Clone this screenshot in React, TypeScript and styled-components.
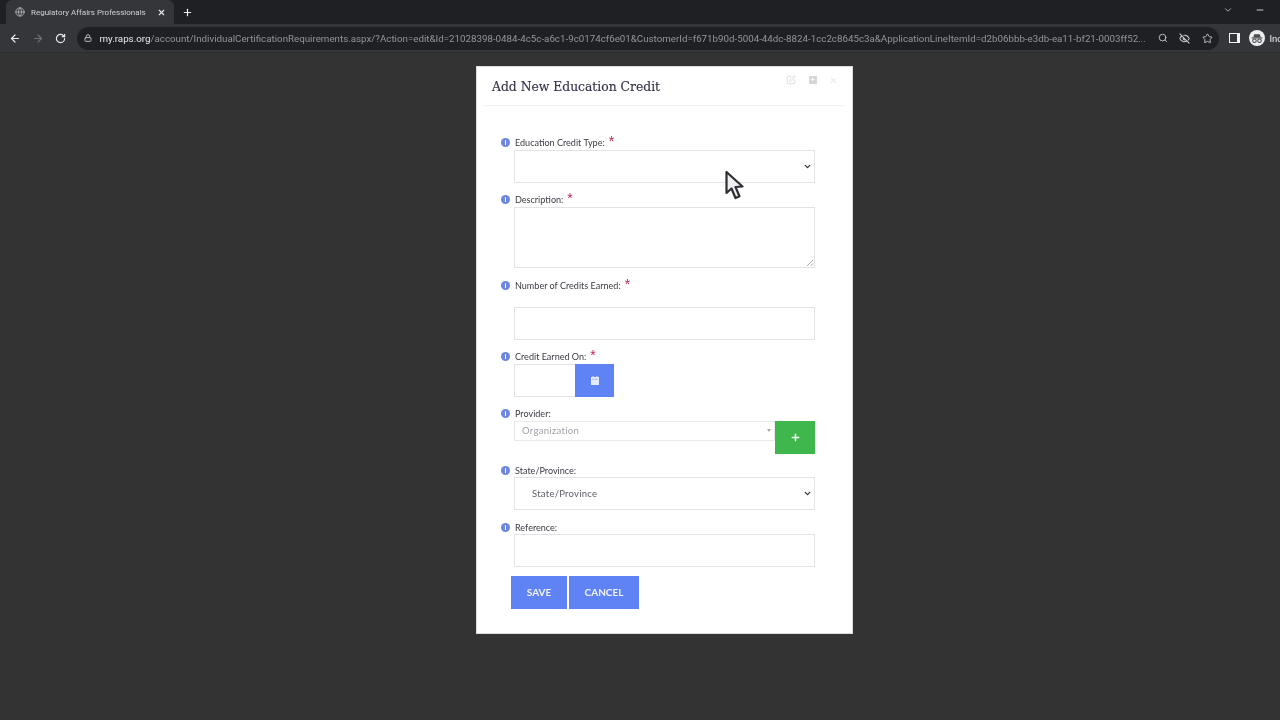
import React from "react";
import styled, { createGlobalStyle } from "styled-components";
import { ArrowLeft, ArrowRight, RotateCw, Lock, Plus, X, ChevronDown, Minus, Search, EyeOff, Star, Globe, SquarePen } from "lucide-react";

const Global = createGlobalStyle`
  html, body { margin: 0; padding: 0; height: 720px; overflow: hidden; background: #333333; }
  body { font-family: "Lato", "Liberation Sans", sans-serif; }
  * { box-sizing: border-box; }
`;

const Screen = styled.div`
  width: 1280px;
  height: 720px;
  position: relative;
  display: flex;
  flex-direction: column;
  overflow: hidden;
  background: #333333;
  filter: blur(0.35px);
`;

const TabStrip = styled.div`
  height: 24px;
  background: #1f2023;
  display: flex;
  align-items: flex-end;
  padding-left: 6px;
  color: #e8eaed;
  flex: none;
`;

const Tab = styled.div`
  width: 168px;
  height: 24px;
  background: #35363a;
  border-radius: 6px 6px 0 0;
  display: flex;
  align-items: center;
  padding: 0 0 0 9px;
  font-family: "Roboto", sans-serif;
  font-size: 8px;
  color: #cfd1d4;
  white-space: nowrap;
`;

const TabTitle = styled.span`
  margin-left: 6px;
  width: 126px;
`;

const NewTab = styled.div`
  margin-left: 8px;
  height: 24px;
  display: flex;
  align-items: center;
`;

const WindowControls = styled.div`
  margin-left: auto;
  height: 20px;
  display: flex;
  align-items: center;
  align-self: flex-start;
  gap: 22px;
  padding-right: 15px;
  color: #c5c7ca;
`;

const Toolbar = styled.div`
  height: 29px;
  background: #35363a;
  border-bottom: 1px solid #2b2c2f;
  display: flex;
  align-items: center;
  padding-left: 9px;
  color: #e8eaed;
  flex: none;
`;

const NavButton = styled.span<{ $dim?: boolean }>`
  width: 12px;
  height: 14px;
  margin-right: 10.5px;
  flex: none;
  display: flex;
  align-items: center;
  justify-content: center;
  color: ${(p) => (p.$dim ? "#6f7175" : "#e8eaed")};
`;

const Omnibox = styled.div`
  width: 1142px;
  flex: none;
  height: 23px;
  border-radius: 12px;
  background: #1f2023;
  display: flex;
  align-items: center;
  padding-left: 7px;
  color: #b9bbbe;
`;

const Url = styled.div`
  margin-left: 8px;
  width: 1048px;
  flex: none;
  font-family: "Roboto", sans-serif;
  font-size: 9.76px;
  color: #92959a;
  white-space: nowrap;
`;

const Host = styled.span`
  color: #e8eaed;
`;

const OmniIcons = styled.div`
  display: flex;
  align-items: center;
  margin-left: 10px;
  gap: 11.5px;
  color: #c5c7ca;
`;

const SidePanelIcon = styled.span`
  width: 11px;
  height: 10px;
  margin-left: 10px;
  flex: none;
  border: 1.5px solid #f1f3f4;
  border-right-width: 3px;
`;

const Avatar = styled.span`
  width: 16px;
  height: 16px;
  margin-left: 9px;
  border-radius: 50%;
  background: #eceef0;
  flex: none;
  display: flex;
  align-items: center;
  justify-content: center;
`;

const Profile = styled.span`
  margin-left: 5px;
  font-family: "Roboto", sans-serif;
  font-size: 9.5px;
  color: #e8eaed;
  white-space: nowrap;
`;

const Page = styled.main`
  flex: 1;
  padding: 13px 0 0 476px;
`;

const Modal = styled.section`
  width: 377px;
  height: 568px;
  background: #ffffff;
  border: 1px solid #dcdcdc;
  display: flex;
  flex-direction: column;
`;

const ModalHeader = styled.header`
  height: 39px;
  margin: 0 8px 0 7px;
  padding-left: 8px;
  border-bottom: 1px solid #f2f2f3;
  display: flex;
  align-items: center;
  justify-content: space-between;
  flex: none;
`;

const Title = styled.h2`
  margin: 0;
  padding-top: 1px;
  font-family: "DejaVu Serif", serif;
  font-weight: 400;
  font-size: 12.35px;
  color: #34334a;
  -webkit-text-stroke: 0.15px #34334a;
`;

const ModalTools = styled.div`
  display: flex;
  align-items: center;
  gap: 12.5px;
  color: #d6d7da;
  margin: -12px 6px 0 0;
`;

const MaximizeIcon = styled.span`
  width: 8px;
  height: 8px;
  background: #d4d5d8;
  border-radius: 1px;
  position: relative;
  &::after {
    content: "+";
    position: absolute;
    inset: 0;
    color: #fff;
    font: 700 8px/8px "Liberation Sans", sans-serif;
    text-align: center;
  }
`;

const Form = styled.form`
  padding: 29px 38px 0 37px;
  display: flex;
  flex-direction: column;
`;

const Field = styled.div<{ $after?: number }>`
  margin-bottom: ${(p) => p.$after ?? 9}px;
`;

const LabelRow = styled.div<{ $below?: number }>`
  height: 14px;
  margin-bottom: ${(p) => p.$below ?? 1}px;
  padding-left: 1px;
  display: flex;
  align-items: center;
  position: relative;
  font-size: 9.05px;
  color: #3a3a44;
  white-space: nowrap;
`;

const InfoDot = styled.span`
  position: absolute;
  left: -13px;
  top: 3px;
  width: 9px;
  height: 9px;
  border-radius: 50%;
  background: #6d86de;
  color: #fff;
  font: 700 7px/9px "Liberation Sans", sans-serif;
  text-align: center;
`;

const Required = styled.span`
  color: #c0264a;
  font-family: "Liberation Sans", sans-serif;
  font-size: 14px;
  line-height: 10px;
  margin-left: 4px;
  position: relative;
  top: -1px;
`;

const controlBase = `
  display: block;
  width: 301px;
  border: 1px solid #e3e3e5;
  background: #fff;
  border-radius: 0;
  outline: none;
  margin: 0;
`;

const SelectWrap = styled.div`
  position: relative;
  width: 301px;
`;

const SelectChevron = styled.span`
  position: absolute;
  right: 3px;
  top: 12px;
  display: flex;
  color: #33333a;
  pointer-events: none;
`;

const Select = styled.select`
  ${controlBase}
  appearance: none;
  height: 33px;
  padding: 0 0 0 17px;
  font-family: "Lato", sans-serif;
  font-size: 9.5px;
  letter-spacing: 0.25px;
  color: #5c5c66;
`;

const AreaWrap = styled.div`
  position: relative;
  width: 301px;
`;

const TextArea = styled.textarea`
  ${controlBase}
  height: 61px;
  resize: none;
`;

const ResizeGrip = styled.svg`
  position: absolute;
  right: 1px;
  bottom: 1px;
  pointer-events: none;
`;

const TextInput = styled.input`
  ${controlBase}
  height: 33px;
`;

const DateGroup = styled.div`
  display: flex;
  height: 33px;
`;

const DateInput = styled.input`
  width: 61px;
  height: 33px;
  border: 1px solid #e3e3e5;
  border-right: 0;
  outline: none;
`;

const CalendarButton = styled.button`
  width: 39px;
  height: 33px;
  border: 0;
  padding: 0;
  background: #5f83f4;
  display: flex;
  align-items: center;
  justify-content: center;
`;

const ProviderRow = styled.div`
  display: flex;
  align-items: flex-start;
  width: 301px;
  height: 33px;
`;

const Combo = styled.div`
  width: 261px;
  height: 20px;
  border: 1px solid #e9e9ea;
  display: flex;
  align-items: center;
  justify-content: space-between;
  padding: 0 3px 1px 7px;
  font-size: 9.5px;
  letter-spacing: 0.3px;
  color: #a2a2a8;
`;

const ComboCaret = styled.span`
  width: 0;
  height: 0;
  border-left: 2px solid transparent;
  border-right: 2px solid transparent;
  border-top: 3px solid #a8a8ae;
`;

const AddButton = styled.button`
  width: 40px;
  height: 33px;
  border: 0;
  padding: 0;
  background: #3fb74c;
  color: #f2fbf3;
  display: flex;
  align-items: center;
  justify-content: center;
`;

const Actions = styled.div`
  display: flex;
  gap: 2px;
  margin-left: -3px;
`;

const ActionButton = styled.button<{ $width: number }>`
  width: ${(p) => p.$width}px;
  height: 33px;
  border: 0;
  padding: 0 0 1px;
  background: #5f83f4;
  color: #f1f4ff;
  font-family: "Lato", sans-serif;
  font-size: 10px;
  font-weight: 700;
`;

const Cursor = styled.svg`
  position: absolute;
  left: 724px;
  top: 170px;
`;

const url = "/account/IndividualCertificationRequirements.aspx/?Action=edit&Id=21028398-0484-4c5c-a6c1-9c0174cf6e01&CustomerId=f671b90d-5004-44dc-8824-1cc2c8645c3a&ApplicationLineItemId=d2b06bbb-e3db-ea11-bf21-0003ff52...";

const Label = ({ text, required, below }: { text: string; required?: boolean; below?: number }) => (
  <LabelRow $below={below}>
    <InfoDot>i</InfoDot>
    {text}
    {required && <Required>*</Required>}
  </LabelRow>
);

const SelectBox = ({ label, children }: { label: string; children?: React.ReactNode }) => (
  <SelectWrap>
    <Select aria-label={label}>{children}</Select>
    <SelectChevron><ChevronDown size={9} strokeWidth={3.4} /></SelectChevron>
  </SelectWrap>
);

export default function App() {
  return (
    <Screen>
      <Global />
      <TabStrip>
        <Tab>
          <Globe size={10} color="#b5b7ba" />
          <TabTitle>Regulatory Affairs Professionals</TabTitle>
          <X size={9} strokeWidth={3} color="#e8eaed" />
        </Tab>
        <NewTab>
          <Plus size={11} strokeWidth={2.6} />
        </NewTab>
        <WindowControls>
          <ChevronDown size={10} />
          <Minus size={10} strokeWidth={2.5} />
        </WindowControls>
      </TabStrip>
      <Toolbar>
        <NavButton><ArrowLeft size={13} strokeWidth={2.4} /></NavButton>
        <NavButton $dim><ArrowRight size={13} strokeWidth={2.2} /></NavButton>
        <NavButton><RotateCw size={11} strokeWidth={2.6} /></NavButton>
        <Omnibox>
          <Lock size={8} strokeWidth={3} />
          <Url><Host>my.raps.org</Host>{url}</Url>
          <OmniIcons>
            <Search size={10} strokeWidth={2.2} />
            <EyeOff size={11} strokeWidth={2.4} />
            <Star size={11} strokeWidth={2} />
          </OmniIcons>
        </Omnibox>
        <SidePanelIcon />
        <Avatar>
          <svg width="12" height="11" viewBox="0 0 11 10">
            <path d="M3 1h5l1 3H2z" fill="#4a4c50" />
            <rect x="0.5" y="4" width="10" height="1" fill="#4a4c50" />
            <circle cx="3.2" cy="7" r="1.6" fill="none" stroke="#4a4c50" />
            <circle cx="7.8" cy="7" r="1.6" fill="none" stroke="#4a4c50" />
          </svg>
        </Avatar>
        <Profile>Incognito</Profile>
      </Toolbar>
      <Page>
        <Modal>
          <ModalHeader>
            <Title>Add New Education Credit</Title>
            <ModalTools>
              <SquarePen size={10} />
              <MaximizeIcon />
              <X size={9} strokeWidth={2} />
            </ModalTools>
          </ModalHeader>
          <Form>
            <Field>
              <Label text="Education Credit Type:" required />
              <SelectBox label="Education Credit Type" />
            </Field>
            <Field $after={10}>
              <Label text="Description:" required />
              <AreaWrap>
                <TextArea aria-label="Description" />
                <ResizeGrip width="8" height="8" viewBox="0 0 8 8">
                  <path d="M1 7 L7 1 M4.5 7 L7 4.5" stroke="#a9a9ad" strokeWidth="1" />
                </ResizeGrip>
              </AreaWrap>
            </Field>
            <Field>
              <Label text="Number of Credits Earned:" required below={15} />
              <TextInput aria-label="Number of Credits Earned" />
            </Field>
            <Field>
              <Label text="Credit Earned On:" required />
              <DateGroup>
                <DateInput aria-label="Credit Earned On" />
                <CalendarButton type="button" aria-label="Open calendar">
                  <svg width="8" height="9" viewBox="0 0 8 9">
                    <path d="M1.5 0h1v1h3V0h1v1H8v8H0V1h1.5z" fill="#e6ecff" />
                    <path d="M1 3.2h6" stroke="#8aa5f7" strokeWidth="0.6" />
                  </svg>
                </CalendarButton>
              </DateGroup>
            </Field>
            <Field>
              <Label text="Provider:" />
              <ProviderRow>
                <Combo>Organization<ComboCaret /></Combo>
                <AddButton type="button" aria-label="Add provider">
                  <Plus size={11} strokeWidth={3.4} />
                </AddButton>
              </ProviderRow>
            </Field>
            <Field $after={10}>
              <Label text="State/Province:" below={0} />
              <SelectBox label="State/Province">
                <option>State/Province</option>
              </SelectBox>
            </Field>
            <Field>
              <Label text="Reference:" below={0} />
              <TextInput aria-label="Reference" />
            </Field>
            <Actions>
              <ActionButton type="button" $width={56}>SAVE</ActionButton>
              <ActionButton type="button" $width={70}>CANCEL</ActionButton>
            </Actions>
          </Form>
        </Modal>
      </Page>
      <Cursor width="22" height="32" viewBox="0 0 22 32">
        <path d="M2.5 2 L2.5 23 L7.5 18.5 L11.5 28 L15.5 26.2 L11.5 17 L18.5 16.5 Z" fill="#f0f0f3" stroke="#2e2e33" strokeWidth="2.2" strokeLinejoin="round" />
      </Cursor>
    </Screen>
  );
}
